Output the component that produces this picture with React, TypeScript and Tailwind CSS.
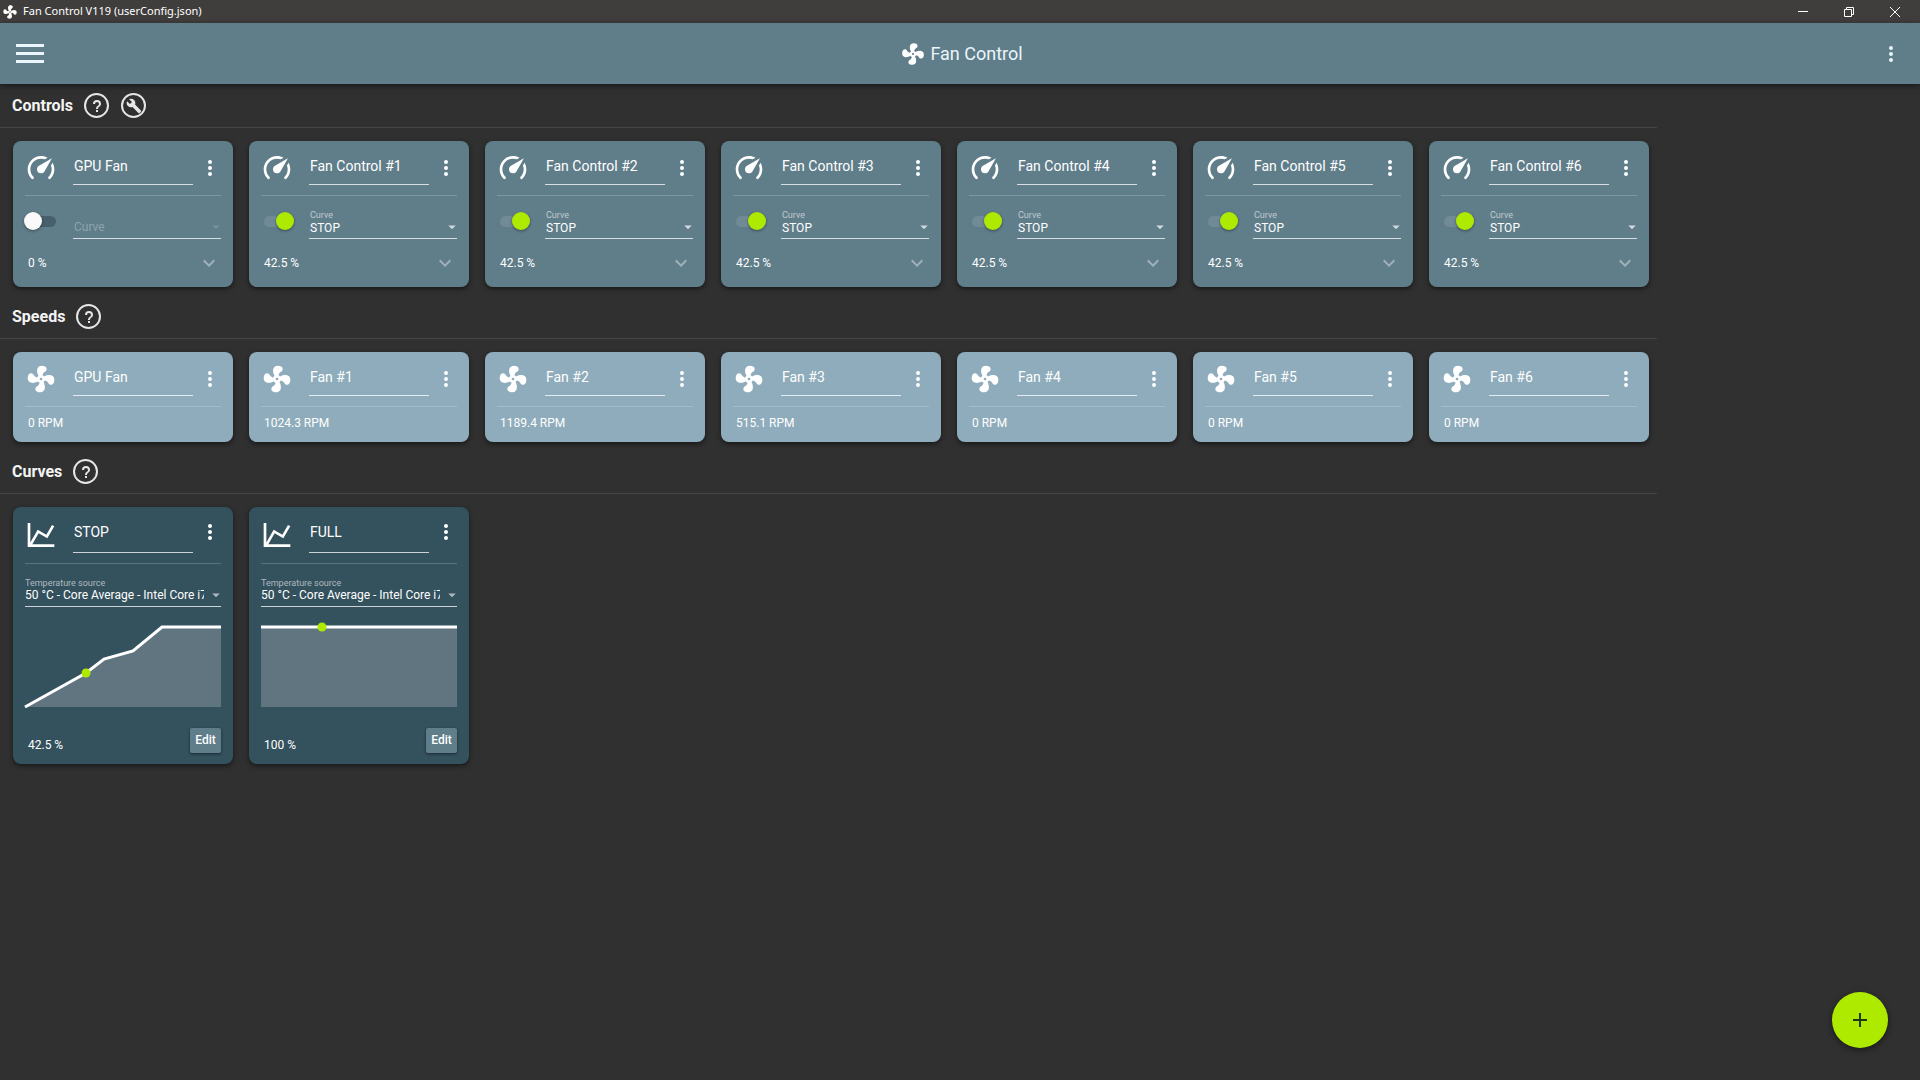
import React, { useId, useState } from 'react';
import { clsx } from 'clsx';

const ICONS = {
  fan: 'M12,11A1,1 0 0,0 11,12A1,1 0 0,0 12,13A1,1 0 0,0 13,12A1,1 0 0,0 12,11M12.5,2C17,2 17.11,5.57 14.75,6.75C13.76,7.24 13.32,8.29 13.13,9.22C13.61,9.42 14.03,9.73 14.35,10.13C18.05,8.13 22.03,8.92 22.03,12.5C22.03,17 18.46,17.1 17.28,14.73C16.78,13.74 15.72,13.3 14.79,13.11C14.59,13.59 14.28,14 13.88,14.34C15.87,18.03 15.08,22 11.5,22C7,22 6.91,18.42 9.27,17.24C10.25,16.75 10.69,15.71 10.89,14.79C10.4,14.59 9.97,14.27 9.65,13.87C5.96,15.85 2,15.07 2,11.5C2,7 5.56,6.89 6.74,9.26C7.24,10.25 8.29,10.68 9.22,10.87C9.41,10.39 9.73,9.97 10.14,9.65C8.15,5.96 8.94,2 12.5,2Z',
  speedometer:
    'M12,16A3,3 0 0,1 9,13C9,11.88 9.61,10.9 10.5,10.39L20.21,4.77L14.68,14.35C14.18,15.33 13.17,16 12,16M12,3C13.81,3 15.5,3.5 16.97,4.32L14.87,5.53C14,5.19 13,5 12,5A8,8 0 0,0 4,13C4,15.21 4.89,17.21 6.34,18.65H6.35C6.74,19.04 6.74,19.67 6.35,20.06C5.96,20.45 5.32,20.45 4.93,20.07V20.07C3.12,18.26 2,15.76 2,13A10,10 0 0,1 12,3M22,13C22,15.76 20.88,18.26 19.07,20.07V20.07C18.68,20.45 18.05,20.45 17.66,20.06C17.27,19.67 17.27,19.04 17.66,18.65V18.65C19.11,17.2 20,15.21 20,13C20,12 19.81,11 19.46,10.1L20.67,8C21.5,9.5 22,11.18 22,13Z',
  chart:
    'M16,11.78L20.24,4.45L21.97,5.45L16.74,14.5L10.23,10.75L5.46,19H22V21H2V3H4V17.54L9.5,8L16,11.78Z',
  dots: 'M12,16A2,2 0 0,1 14,18A2,2 0 0,1 12,20A2,2 0 0,1 10,18A2,2 0 0,1 12,16M12,10A2,2 0 0,1 14,12A2,2 0 0,1 12,14A2,2 0 0,1 10,12A2,2 0 0,1 12,10M12,4A2,2 0 0,1 14,6A2,2 0 0,1 12,8A2,2 0 0,1 10,6A2,2 0 0,1 12,4Z',
  help: 'M11,18H13V16H11V18M12,6A4,4 0 0,0 8,10H10A2,2 0 0,1 12,8A2,2 0 0,1 14,10C14,12 11,11.75 11,15H13C13,12.75 16,12.5 16,10A4,4 0 0,0 12,6Z',
  wrench:
    'M22.7,19L13.6,9.9C14.5,7.6 14,4.9 12.1,3C10.1,1 7.1,0.6 4.7,1.7L9,6L6,9L1.6,4.7C0.4,7.1 0.9,10.1 2.9,12.1C4.8,14 7.5,14.5 9.8,13.6L18.9,22.7C19.3,23.1 19.9,23.1 20.3,22.7L22.6,20.4C23.1,20 23.1,19.3 22.7,19Z',
  chevron: 'M7.41,8.58L12,13.17L16.59,8.58L18,10L12,16L6,10L7.41,8.58Z',
  caret: 'M7,10L12,15L17,10H7Z',
  plus: 'M19,13H13V19H11V13H5V11H11V5H13V11H19V13Z',
};

type IconName = keyof typeof ICONS;

const Icon = ({ name, className }: { name: IconName; className?: string }) => (
  <svg viewBox="0 0 24 24" fill="currentColor" aria-hidden="true" className={clsx('shrink-0', className)}>
    <path d={ICONS[name]} />
  </svg>
);

interface Control {
  name: string;
  curve: string;
  value: string;
  enabled: boolean;
}

const CONTROLS: Control[] = [
  { name: 'GPU Fan', curve: '', value: '0 %', enabled: false },
  { name: 'Fan Control #1', curve: 'STOP', value: '42.5 %', enabled: true },
  { name: 'Fan Control #2', curve: 'STOP', value: '42.5 %', enabled: true },
  { name: 'Fan Control #3', curve: 'STOP', value: '42.5 %', enabled: true },
  { name: 'Fan Control #4', curve: 'STOP', value: '42.5 %', enabled: true },
  { name: 'Fan Control #5', curve: 'STOP', value: '42.5 %', enabled: true },
  { name: 'Fan Control #6', curve: 'STOP', value: '42.5 %', enabled: true },
];

const SPEEDS = [
  { name: 'GPU Fan', rpm: '0 RPM' },
  { name: 'Fan #1', rpm: '1024.3 RPM' },
  { name: 'Fan #2', rpm: '1189.4 RPM' },
  { name: 'Fan #3', rpm: '515.1 RPM' },
  { name: 'Fan #4', rpm: '0 RPM' },
  { name: 'Fan #5', rpm: '0 RPM' },
  { name: 'Fan #6', rpm: '0 RPM' },
];

// Points live in a 196x84 box, y grows downwards
const CURVES = [
  {
    name: 'STOP',
    value: '42.5 %',
    points: [[0, 82], [61, 48], [79, 34], [108, 26], [137, 2], [196, 2]],
    current: [61, 48],
  },
  { name: 'FULL', value: '100 %', points: [[0, 2], [196, 2]], current: [61, 2] },
];

const TEMPERATURE_SOURCE = '50 °C - Core Average - Intel Core i7-8700K';

const TitleBar = () => (
  <div className="flex h-[23px] items-center justify-between bg-[#3f3e3c] text-white">
    <div className="flex items-center gap-[5px] pl-0.5">
      <Icon name="fan" className="size-4" />
      <span className="font-['Noto_Sans',sans-serif] text-[11px]">Fan Control V119 (userConfig.json)</span>
    </div>
    <div className="flex h-full pr-0.5">
      <button aria-label="Minimize" className="flex w-[46px] items-center justify-center">
        <svg viewBox="0 0 10 10" className="size-2.5" stroke="currentColor" fill="none">
          <path d="M0 4.5H10" />
        </svg>
      </button>
      <button aria-label="Restore" className="flex w-[46px] items-center justify-center">
        <svg viewBox="0 0 10 10" className="size-2.5" stroke="currentColor" fill="none">
          <path d="M.5 2.5H7.5V9.5H.5ZM2.5 2.5V.5H9.5V7.5H7.5" />
        </svg>
      </button>
      <button aria-label="Close" className="flex w-[46px] items-center justify-center">
        <svg viewBox="0 0 10 10" className="size-2.5" stroke="currentColor" fill="none">
          <path d="M0 0L10 10M10 0L0 10" />
        </svg>
      </button>
    </div>
  </div>
);

const AppBar = () => (
  <header className="relative z-10 grid h-[61px] grid-cols-[1fr_auto_1fr] items-center bg-[#607d8a] pr-[17px] pl-4 text-[#eaf6fb] shadow-[0_2px_6px_rgba(0,0,0,0.5)]">
    <button aria-label="Open menu" className="flex w-7 flex-col gap-[5px]">
      <span className="h-[3px] bg-current" />
      <span className="h-[3px] bg-current" />
      <span className="h-[3px] bg-current" />
    </button>
    <h1 className="flex items-center justify-center gap-1 pl-1 text-lg">
      <Icon name="fan" className="size-[26px] text-white" />
      Fan Control
    </h1>
    <button aria-label="More options" className="justify-self-end">
      <Icon name="dots" className="size-6" />
    </button>
  </header>
);

interface SectionProps {
  title: string;
  tools?: boolean;
  children: React.ReactNode;
}

const Section = ({ title, tools = false, children }: SectionProps) => (
  <section className="max-w-[1657px]">
    <div className="flex h-11 items-center gap-[11px] border-b border-[#454545] pl-3">
      <h2 className="text-base font-bold text-[#f4f4f4]">{title}</h2>
      <button
        aria-label={`${title} help`}
        className="flex size-[25px] items-center justify-center rounded-full border-2 border-[#e6e6e6] text-[#e6e6e6]"
      >
        <Icon name="help" className="size-6" />
      </button>
      {tools && (
        <button
          aria-label={`${title} setup`}
          className="ml-px flex size-[25px] items-center justify-center rounded-full border-2 border-[#e6e6e6] text-[#e6e6e6]"
        >
          <Icon name="wrench" className="size-4" />
        </button>
      )}
    </div>
    <div className="flex flex-wrap gap-4 pt-[13px] pb-2 pl-[13px]">{children}</div>
  </section>
);

interface CardProps {
  icon: IconName;
  name: string;
  tall?: boolean;
  className?: string;
  children: React.ReactNode;
}

const Card = ({ icon, name, tall = false, className, children }: CardProps) => {
  const [label, setLabel] = useState(name);

  return (
    <article className={clsx('w-[220px] rounded-lg px-3 text-white shadow-[0_2px_5px_rgba(0,0,0,0.5)]', className)}>
      <div className={clsx('flex items-center border-b border-white/20', tall ? 'h-[57px]' : 'h-[55px]')}>
        <Icon name={icon} className="size-8" />
        <input
          aria-label={`${name} name`}
          value={label}
          onChange={(e) => setLabel(e.target.value)}
          className={clsx(
            'ml-4 w-[120px] border-b border-white/75 pl-px text-sm outline-none',
            tall ? 'h-9 pb-1.5' : 'h-[34px] pb-1'
          )}
        />
        <button aria-label={`${name} options`} className={clsx('ml-[5px]', tall && 'pb-1.5')}>
          <Icon name="dots" className="size-6" />
        </button>
      </div>
      {children}
    </article>
  );
};

const ControlCard = ({ name, curve, value, enabled }: Control) => {
  const id = useId();
  const [on, setOn] = useState(enabled);

  return (
    <Card icon="speedometer" name={name} className="h-[146px] bg-[#607d8a]">
      <div className="flex h-[43px]">
        <label className="relative mt-[15px] ml-[3px] flex h-5 w-8 shrink-0 items-center">
          <input
            type="checkbox"
            role="switch"
            aria-label={`${name} enabled`}
            checked={on}
            onChange={() => setOn(!on)}
            className="peer sr-only"
          />
          <span className="h-[11px] w-7 rounded-full bg-[#47606b] peer-checked:bg-[#708a96]" />
          <span className="absolute -left-1 size-[18px] rounded-full bg-[#fafafa] shadow-[0_1px_3px_rgba(0,0,0,0.4)] peer-checked:left-3 peer-checked:bg-[#aeea00]" />
        </label>
        <div className="relative ml-[13px] flex-1 border-b border-white/75">
          <label
            htmlFor={id}
            className={clsx(
              'absolute left-px',
              curve ? 'top-[13px] text-[9px] leading-3 text-white/60' : 'top-[23px] text-xs leading-4 text-white/30'
            )}
          >
            Curve
          </label>
          <select
            id={id}
            disabled={!on}
            defaultValue={curve}
            className="h-full w-full appearance-none pt-6 pb-0.5 pl-px text-xs leading-4 outline-none"
          >
            <option value="" />
            <option>STOP</option>
            <option>FULL</option>
          </select>
          <Icon
            name="caret"
            className={clsx('pointer-events-none absolute -right-1 bottom-0.5 size-[18px]', on ? 'text-white/70' : 'text-white/15')}
          />
        </div>
      </div>
      <div className="flex h-12 items-center justify-between pl-[3px] text-xs">
        {value}
        <button aria-label={`Expand ${name}`}>
          <Icon name="chevron" className="size-6 text-white/40" />
        </button>
      </div>
    </Card>
  );
};

const CurveCard = ({ name, value, points, current }: (typeof CURVES)[number]) => {
  const id = useId();
  const line = points.map((p) => p.join(',')).join(' ');

  return (
    <Card icon="chart" name={name} tall className="h-[257px] bg-[#34515e]">
      <div className="relative mt-[13px] h-[30px] border-b border-white/75">
        <label htmlFor={id} className="absolute top-0 left-0 text-[9px] leading-3 text-white/60">
          Temperature source
        </label>
        <select
          id={id}
          className="h-full w-full appearance-none overflow-hidden pt-2.5 pr-[17px] pb-[3px] text-xs leading-4 outline-none"
        >
          <option>{TEMPERATURE_SOURCE}</option>
        </select>
        <Icon name="caret" className="pointer-events-none absolute -right-1 bottom-0.5 size-[18px] text-white/60" />
      </div>
      <svg viewBox="0 0 196 84" className="mt-[18px] block h-[84px] w-full overflow-visible">
        <polygon points={`0,82 ${line} 196,82`} fill="#607580" />
        <polyline points={line} fill="none" stroke="#fff" strokeWidth="3" />
        <circle cx={current[0]} cy={current[1]} r="4.5" fill="#aeea00" />
      </svg>
      <div className="mt-[18px] flex items-center justify-between pl-[3px] text-xs">
        <span className="pt-2.5">{value}</span>
        <button className="h-[25px] w-[31px] rounded-xs bg-[#607d8a] font-medium shadow-[0_1px_3px_rgba(0,0,0,0.5)]">
          Edit
        </button>
      </div>
    </Card>
  );
};

export default function App() {
  return (
    <div className="min-h-screen bg-[#303030] font-[Roboto,sans-serif]">
      <TitleBar />
      <AppBar />
      <main>
        <Section title="Controls" tools>
          {CONTROLS.map((control) => (
            <ControlCard key={control.name} {...control} />
          ))}
        </Section>
        <Section title="Speeds">
          {SPEEDS.map(({ name, rpm }) => (
            <Card key={name} icon="fan" name={name} className="h-[90px] bg-[#8eacbb]">
              <p className="pt-2 pl-[3px] text-xs">{rpm}</p>
            </Card>
          ))}
        </Section>
        <Section title="Curves">
          {CURVES.map((curve) => (
            <CurveCard key={curve.name} {...curve} />
          ))}
        </Section>
      </main>
      <button
        aria-label="Add"
        className="fixed right-8 bottom-8 flex size-14 items-center justify-center rounded-full bg-[#aeea00] text-[#1f3a12] shadow-[0_2px_6px_rgba(0,0,0,0.5)]"
      >
        <Icon name="plus" className="size-6" />
      </button>
    </div>
  );
}
